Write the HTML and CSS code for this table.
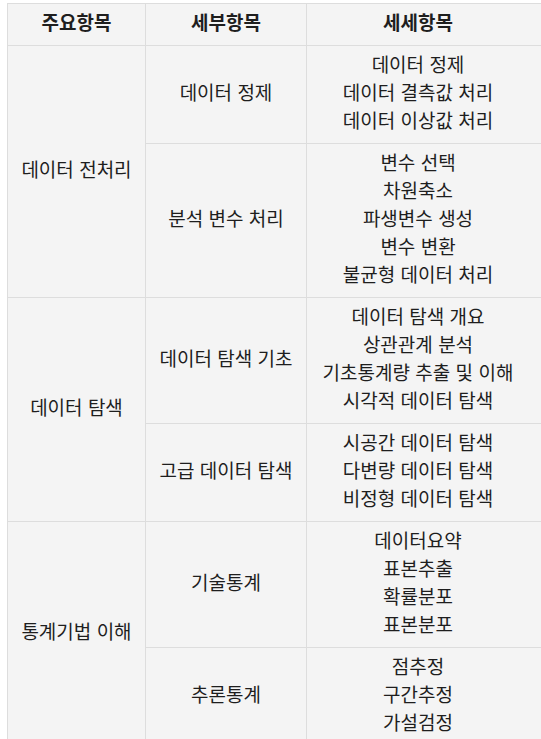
FILE: index.html
```html
<!DOCTYPE html>
<html lang="ko">
<head>
<meta charset="utf-8">
<title>항목표</title>
<link rel="stylesheet" href="styles.css">
</head>
<body>
<div class="wrap">
<table class="items">
  <colgroup>
    <col class="c1"><col class="c2"><col class="c3">
  </colgroup>
  <thead>
    <tr><th>주요항목</th><th>세부항목</th><th class="detail">세세항목</th></tr>
  </thead>
  <tbody>
    <tr>
      <td rowspan="2">데이터 전처리</td>
      <td>데이터 정제</td>
      <td class="detail">데이터 정제<br>데이터 결측값 처리<br>데이터 이상값 처리</td>
    </tr>
    <tr>
      <td>분석 변수 처리</td>
      <td class="detail">변수 선택<br>차원축소<br>파생변수 생성<br>변수 변환<br>불균형 데이터 처리</td>
    </tr>
    <tr>
      <td rowspan="2">데이터 탐색</td>
      <td>데이터 탐색 기초</td>
      <td class="detail">데이터 탐색 개요<br>상관관계 분석<br>기초통계량 추출 및 이해<br>시각적 데이터 탐색</td>
    </tr>
    <tr>
      <td>고급 데이터 탐색</td>
      <td class="detail">시공간 데이터 탐색<br>다변량 데이터 탐색<br>비정형 데이터 탐색</td>
    </tr>
    <tr>
      <td rowspan="2">통계기법 이해</td>
      <td>기술통계</td>
      <td class="detail">데이터요약<br>표본추출<br>확률분포<br>표본분포</td>
    </tr>
    <tr>
      <td>추론통계</td>
      <td class="detail">점추정<br>구간추정<br>가설검정</td>
    </tr>
  </tbody>
</table>
</div>
</body>
</html>
```

FILE: styles.css
```css
html, body {
  margin: 0;
  padding: 0;
  background: #ffffff;
}

.wrap {
  padding: 3px 0 0 7px;
}

.items {
  border-collapse: collapse;
  table-layout: fixed;
  width: 534px;
  font-family: "Noto Sans CJK KR", "Noto Sans", sans-serif;
  font-size: 19px;
  line-height: 28px;
  color: #1e1e1e;
}

.c1 { width: 138px; }
.c2 { width: 161px; }
.c3 { width: 235px; }

.items th,
.items td {
  background: #f4f4f4;
  border: 1px solid #dddddd;
  text-align: center;
  vertical-align: middle;
  padding: 4px 2px 9px 2px;
  white-space: nowrap;
}

.items th {
  font-weight: bold;
}

.items .detail {
  padding-left: 0;
  padding-right: 12px;
}
```
